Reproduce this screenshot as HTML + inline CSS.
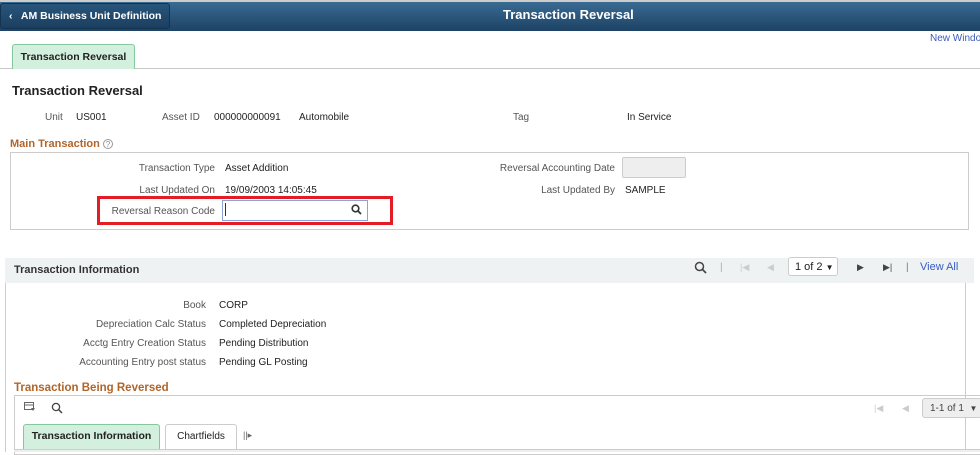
<!DOCTYPE html>
<html><head><meta charset="utf-8"><style>
*{margin:0;padding:0;box-sizing:border-box}
body{width:980px;height:452px;overflow:hidden;background:#fff;font-family:"Liberation Sans",Arial,sans-serif;font-size:10px;color:#222;position:relative}
.a{position:absolute;white-space:nowrap}
.lbl{color:#555}
.r{text-align:right}
.br{color:#b0652a;font-weight:bold;font-size:12px}
</style></head><body>
<div class="a" style="left:0;top:0;width:980px;height:31px;background:linear-gradient(#3a6b93,#1d4264);border-top:2px solid #ccc"></div>
<div class="a" style="left:0;top:3px;width:170px;height:26px;background:linear-gradient(#28557b,#1b3f60);border:1px solid #15334f;border-radius:3px"></div>
<div class="a" style="left:9px;top:10px;color:#fff;font-weight:bold;font-size:10.5px">&#8249;&nbsp;&nbsp; AM Business Unit Definition</div>
<div class="a" style="left:503px;top:7px;color:#fff;font-weight:bold;font-size:13px">Transaction Reversal</div>
<div class="a" style="left:930px;top:33px;color:#3b5bbf;font-size:10px">New Window</div>
<div class="a" style="left:0;top:68px;width:980px;height:1px;background:#c8c8c8"></div>
<div class="a" style="left:12px;top:44px;width:123px;height:25px;background:#d3efdd;border:1px solid #86c79e;border-bottom:none;border-radius:3px 3px 0 0;font-weight:bold;font-size:10.5px;text-align:center;line-height:24px">Transaction Reversal</div>
<div class="a" style="left:12px;top:83px;font-weight:bold;font-size:13px">Transaction Reversal</div>
<div class="a lbl" style="left:45px;top:112px">Unit</div>
<div class="a" style="left:76px;top:112px">US001</div>
<div class="a lbl" style="left:162px;top:112px">Asset ID</div>
<div class="a" style="left:214px;top:112px">000000000091</div>
<div class="a" style="left:299px;top:112px">Automobile</div>
<div class="a lbl" style="left:513px;top:112px">Tag</div>
<div class="a" style="left:627px;top:112px">In Service</div>
<div class="a br" style="left:10px;top:138px;font-size:11px">Main Transaction <span style="color:#888;border:1px solid #999;border-radius:50%;display:inline-block;width:10px;height:10px;line-height:9px;text-align:center;font-size:8px;font-weight:normal">?</span></div>
<div class="a" style="left:10px;top:152px;width:959px;height:78px;border:1px solid #ccc"></div>
<div class="a lbl r" style="left:80px;width:135px;top:163px">Transaction Type</div>
<div class="a" style="left:225px;top:163px">Asset Addition</div>
<div class="a lbl r" style="left:430px;width:185px;top:163px">Reversal Accounting Date</div>
<div class="a" style="left:622px;top:157px;width:64px;height:21px;background:#eee;border:1px solid #ccc;border-radius:2px"></div>
<div class="a lbl r" style="left:80px;width:135px;top:185px">Last Updated On</div>
<div class="a" style="left:225px;top:185px">19/09/2003 14:05:45</div>
<div class="a lbl r" style="left:430px;width:185px;top:185px">Last Updated By</div>
<div class="a" style="left:625px;top:185px">SAMPLE</div>
<div class="a" style="left:97px;top:196px;width:296px;height:29px;border:3px solid #e31c25"></div>
<div class="a lbl r" style="left:80px;width:135px;top:206px">Reversal Reason Code</div>
<div class="a" style="left:222px;top:200px;width:146px;height:21px;border:1px solid #8aa4d6;background:#fff"></div>
<div class="a" style="left:225px;top:203px;width:1px;height:13px;background:#333"></div>
<svg class="a" style="left:351px;top:204px" width="11" height="11"><circle cx="4.5" cy="4.5" r="3.3" fill="none" stroke="#333" stroke-width="1.6"/><line x1="7" y1="7" x2="10" y2="10" stroke="#333" stroke-width="1.8"/></svg>
<div class="a" style="left:5px;top:258px;width:961px;height:194px;border-left:1px solid #ccc;border-right:1px solid #ccc"></div>
<div class="a" style="left:5px;top:258px;width:969px;height:25px;background:#eef2f3"></div>
<div class="a" style="left:14px;top:264px;font-weight:bold;font-size:11px;color:#333">Transaction Information</div>
<svg class="a" style="left:694px;top:261px" width="13" height="13"><circle cx="5.5" cy="5.5" r="4" fill="none" stroke="#444" stroke-width="1.5"/><line x1="8.5" y1="8.5" x2="12" y2="12" stroke="#444" stroke-width="1.7"/></svg>
<div class="a" style="left:720px;top:262px;color:#aaa">|</div>
<div class="a" style="left:740px;top:262px;color:#ccc;font-size:9px">|&#9664;</div>
<div class="a" style="left:767px;top:262px;color:#ccc;font-size:9px">&#9664;</div>
<div class="a" style="left:788px;top:257px;width:50px;height:19px;border:1px solid #ccc;border-radius:3px;background:#fff;padding:3px 0 0 6px;font-size:11px">1 of 2 <span style="font-size:8px">&#9660;</span></div>
<div class="a" style="left:857px;top:262px;color:#444;font-size:9px">&#9654;</div>
<div class="a" style="left:883px;top:262px;color:#444;font-size:9px">&#9654;|</div>
<div class="a" style="left:906px;top:262px;color:#777">|</div>
<div class="a" style="left:920px;top:261px;color:#3b5bbf;font-size:11px">View All</div>
<div class="a lbl r" style="left:40px;width:166px;top:300px">Book</div>
<div class="a" style="left:219px;top:300px">CORP</div>
<div class="a lbl r" style="left:40px;width:166px;top:319px">Depreciation Calc Status</div>
<div class="a" style="left:219px;top:319px">Completed Depreciation</div>
<div class="a lbl r" style="left:40px;width:166px;top:338px">Acctg Entry Creation Status</div>
<div class="a" style="left:219px;top:338px">Pending Distribution</div>
<div class="a lbl r" style="left:40px;width:166px;top:357px">Accounting Entry post status</div>
<div class="a" style="left:219px;top:357px">Pending GL Posting</div>
<div class="a br" style="left:14px;top:382px;font-size:11.5px">Transaction Being Reversed</div>
<div class="a" style="left:14px;top:395px;width:966px;height:60px;border:1px solid #ccc;border-right:none"></div>
<svg class="a" style="left:24px;top:402px" width="12" height="11"><rect x="0.5" y="0.5" width="9" height="7" fill="none" stroke="#666"/><line x1="0.5" y1="3" x2="9.5" y2="3" stroke="#666"/><path d="M7 6 L11 6 L9 9 Z" fill="#666"/></svg>
<svg class="a" style="left:51px;top:402px" width="12" height="12"><circle cx="5" cy="5" r="3.6" fill="none" stroke="#444" stroke-width="1.3"/><line x1="7.7" y1="7.7" x2="11" y2="11" stroke="#444" stroke-width="1.5"/></svg>
<div class="a" style="left:874px;top:403px;color:#ccc;font-size:9px">|&#9664;</div>
<div class="a" style="left:902px;top:403px;color:#ccc;font-size:9px">&#9664;</div>
<div class="a" style="left:922px;top:398px;width:60px;height:20px;border:1px solid #ccc;border-radius:3px;background:#eee;padding:4px 0 0 7px;color:#444">1-1 of 1 &nbsp;<span style="font-size:8px">&#9660;</span></div>
<div class="a" style="left:23px;top:424px;width:137px;height:25px;background:#d3efdd;border:1px solid #86c79e;border-bottom:none;border-radius:3px 3px 0 0;font-weight:bold;font-size:10.5px;text-align:center;line-height:23px">Transaction Information</div>
<div class="a" style="left:165px;top:424px;width:72px;height:25px;background:#fff;border:1px solid #ccc;border-bottom:none;border-radius:3px 3px 0 0;text-align:center;line-height:23px">Chartfields</div>
<div class="a" style="left:243px;top:430px;color:#666;font-size:9px">||&#9656;</div>
<div class="a" style="left:14px;top:449px;width:966px;height:3px;background:#eee;border-top:1px solid #ccc"></div>
</body></html>
